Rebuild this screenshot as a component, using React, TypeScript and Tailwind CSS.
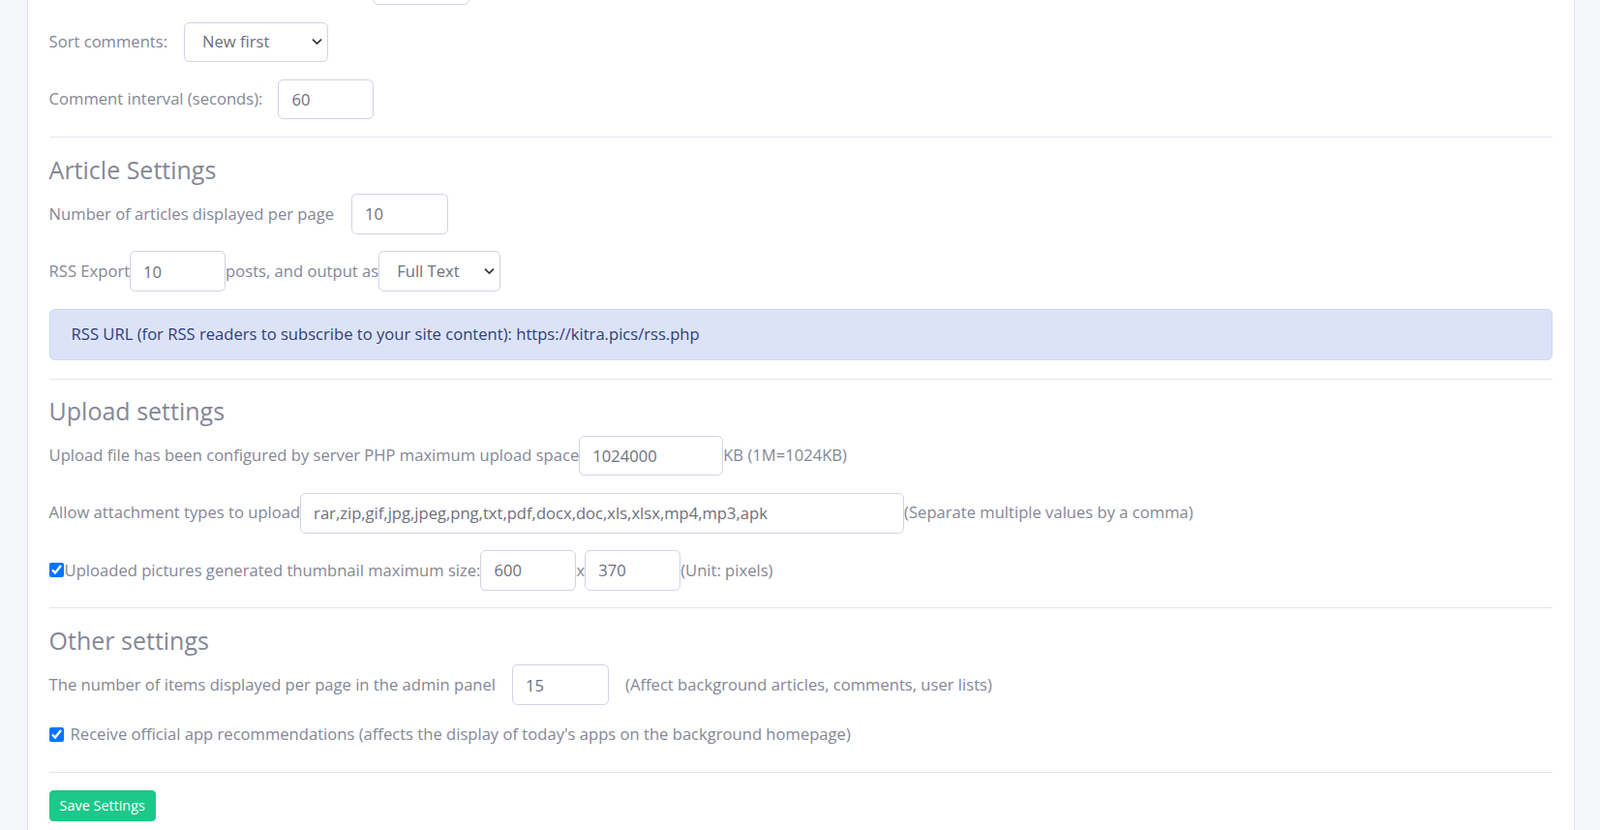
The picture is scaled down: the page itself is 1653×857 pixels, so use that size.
import { useState } from 'react';

interface FieldProps {
  value: string;
  className: string;
}

function Field({ value, className }: FieldProps) {
  const [val, setVal] = useState(value);
  return (
    <input
      type="text"
      value={val}
      onChange={(e) => setVal(e.target.value)}
      className={`h-[41.6px] shrink-0 rounded-[5.6px] border border-[#d1d3e2] bg-white px-[13px] text-[16.6px] text-[#6e707e] outline-none focus:border-[#bac8f3] ${className}`}
    />
  );
}

interface PickerProps {
  value: string;
  options: string[];
  className: string;
}

function Picker({ value, options, className }: PickerProps) {
  const [val, setVal] = useState(value);
  return (
    <div className={`relative shrink-0 ${className}`}>
      <select
        value={val}
        onChange={(e) => setVal(e.target.value)}
        className="h-[41.6px] w-full appearance-none rounded-[5.6px] border border-[#d1d3e2] bg-white pl-[18px] pr-8 text-[16.6px] text-[#6e707e] outline-none"
      >
        {options.map((o) => (
          <option key={o} value={o}>
            {o}
          </option>
        ))}
      </select>
      {/* native-looking chevron */}
      <svg
        className="pointer-events-none absolute right-[6px] top-1/2 -translate-y-1/2"
        width="11"
        height="7"
        viewBox="0 0 11 7"
      >
        <path d="M1 1.2l4.5 4.3L10 1.2" fill="none" stroke="#333" strokeWidth="1.7" />
      </svg>
    </div>
  );
}

function Divider() {
  return <div className="my-[17.6px] h-px bg-[#e3e6f0]" />;
}

function Heading({ children }: { children: string }) {
  return <h4 className="mb-[8.8px] text-[25px] leading-[31.7px] font-normal text-[#858796]">{children}</h4>;
}

export default function App() {
  const [thumb, setThumb] = useState(true);
  const [recommend, setRecommend] = useState(true);

  return (
    <div className="h-screen overflow-hidden bg-[#f5f6fa] pl-[28px] pr-[26px] font-['Open_Sans',sans-serif] text-[16.6px] text-[#858796]">
      <div className="-mt-[57.5px] border border-[#e3e6f0] bg-white px-[21.6px] pt-[20px] pb-[60px]">
        {/* Comment Settings (tail, scrolled past) */}
        <div className="mb-[17.6px] flex h-[41.6px] items-center">
          <div className="mr-[17px] w-[317px]" />
          <Field value="10" className="w-[100px]" />
        </div>

        <div className="mb-[17.6px] flex h-[41.6px] items-center">
          <span className="mr-[17px]">Sort comments:</span>
          <Picker value="New first" options={['New first', 'Old first']} className="w-[149px]" />
        </div>

        <div className="mb-[17.6px] flex h-[41.6px] items-center">
          <span className="mr-[16px]">Comment interval (seconds):</span>
          <Field value="60" className="w-[99px]" />
        </div>

        <Divider />

        {/* Article Settings */}
        <Heading>Article Settings</Heading>
        <div className="mb-[17.6px] flex h-[41.6px] items-center">
          <span className="mr-[18px]">Number of articles displayed per page</span>
          <Field value="10" className="w-[100px]" />
        </div>

        <div className="mb-[17.6px] flex h-[41.6px] items-center">
          <span>RSS Export</span>
          <Field value="10" className="w-[99px]" />
          <span>posts, and output as</span>
          <Picker value="Full Text" options={['Full Text', 'Summary']} className="w-[126px]" />
        </div>

        <div className="mb-[18.6px] flex h-[53.6px] items-center rounded-[5.6px] border border-[#cdd8f6] bg-[#dce3f9] px-[22px] text-[#2e3f75]">
          RSS URL (for RSS readers to subscribe to your site content): https://kitra.pics/rss.php
        </div>

        <Divider />

        {/* Upload settings */}
        <Heading>Upload settings</Heading>
        <div className="mb-[17.6px] flex h-[41.6px] items-center">
          <span>Upload file has been configured by server PHP maximum upload space</span>
          <Field value="1024000" className="w-[149px]" />
          <span>KB (1M=1024KB)</span>
        </div>

        <div className="mb-[17.6px] flex h-[41.6px] items-center">
          <span>Allow attachment types to upload</span>
          <Field value="rar,zip,gif,jpg,jpeg,png,txt,pdf,docx,doc,xls,xlsx,mp4,mp3,apk" className="w-[624px]" />
          <span>(Separate multiple values by a comma)</span>
        </div>

        <div className="mb-[17.6px] flex h-[41.6px] items-center">
          <input
            type="checkbox"
            checked={thumb}
            onChange={(e) => setThumb(e.target.checked)}
            className="m-0 h-[15px] w-[15px] shrink-0 accent-[#0075ff]"
          />
          <span className="ml-[1px]">Uploaded pictures generated thumbnail maximum size:</span>
          <Field value="600" className="w-[99px]" />
          <span>x</span>
          <Field value="370" className="w-[99px]" />
          <span>(Unit: pixels)</span>
        </div>

        <Divider />

        {/* Other settings */}
        <Heading>Other settings</Heading>
        <div className="mb-[17.6px] flex h-[41.6px] items-center">
          <span className="mr-[17px]">The number of items displayed per page in the admin panel</span>
          <Field value="15" className="w-[100px]" />
          <span className="ml-[17px]">(Affect background articles, comments, user lists)</span>
        </div>

        <div className="mb-[25.2px] flex h-[26.4px] items-center">
          <input
            type="checkbox"
            checked={recommend}
            onChange={(e) => setRecommend(e.target.checked)}
            className="m-0 h-[15px] w-[15px] shrink-0 accent-[#0075ff]"
          />
          <span className="ml-[7px]">
            Receive official app recommendations (affects the display of today's apps on the background homepage)
          </span>
        </div>

        <Divider />

        <button className="h-[32px] rounded-[4px] border border-[#1cc88a] bg-[#1cc88a] px-[10px] text-[14.4px] text-white hover:bg-[#17a673]">
          Save Settings
        </button>
      </div>
    </div>
  );
}
